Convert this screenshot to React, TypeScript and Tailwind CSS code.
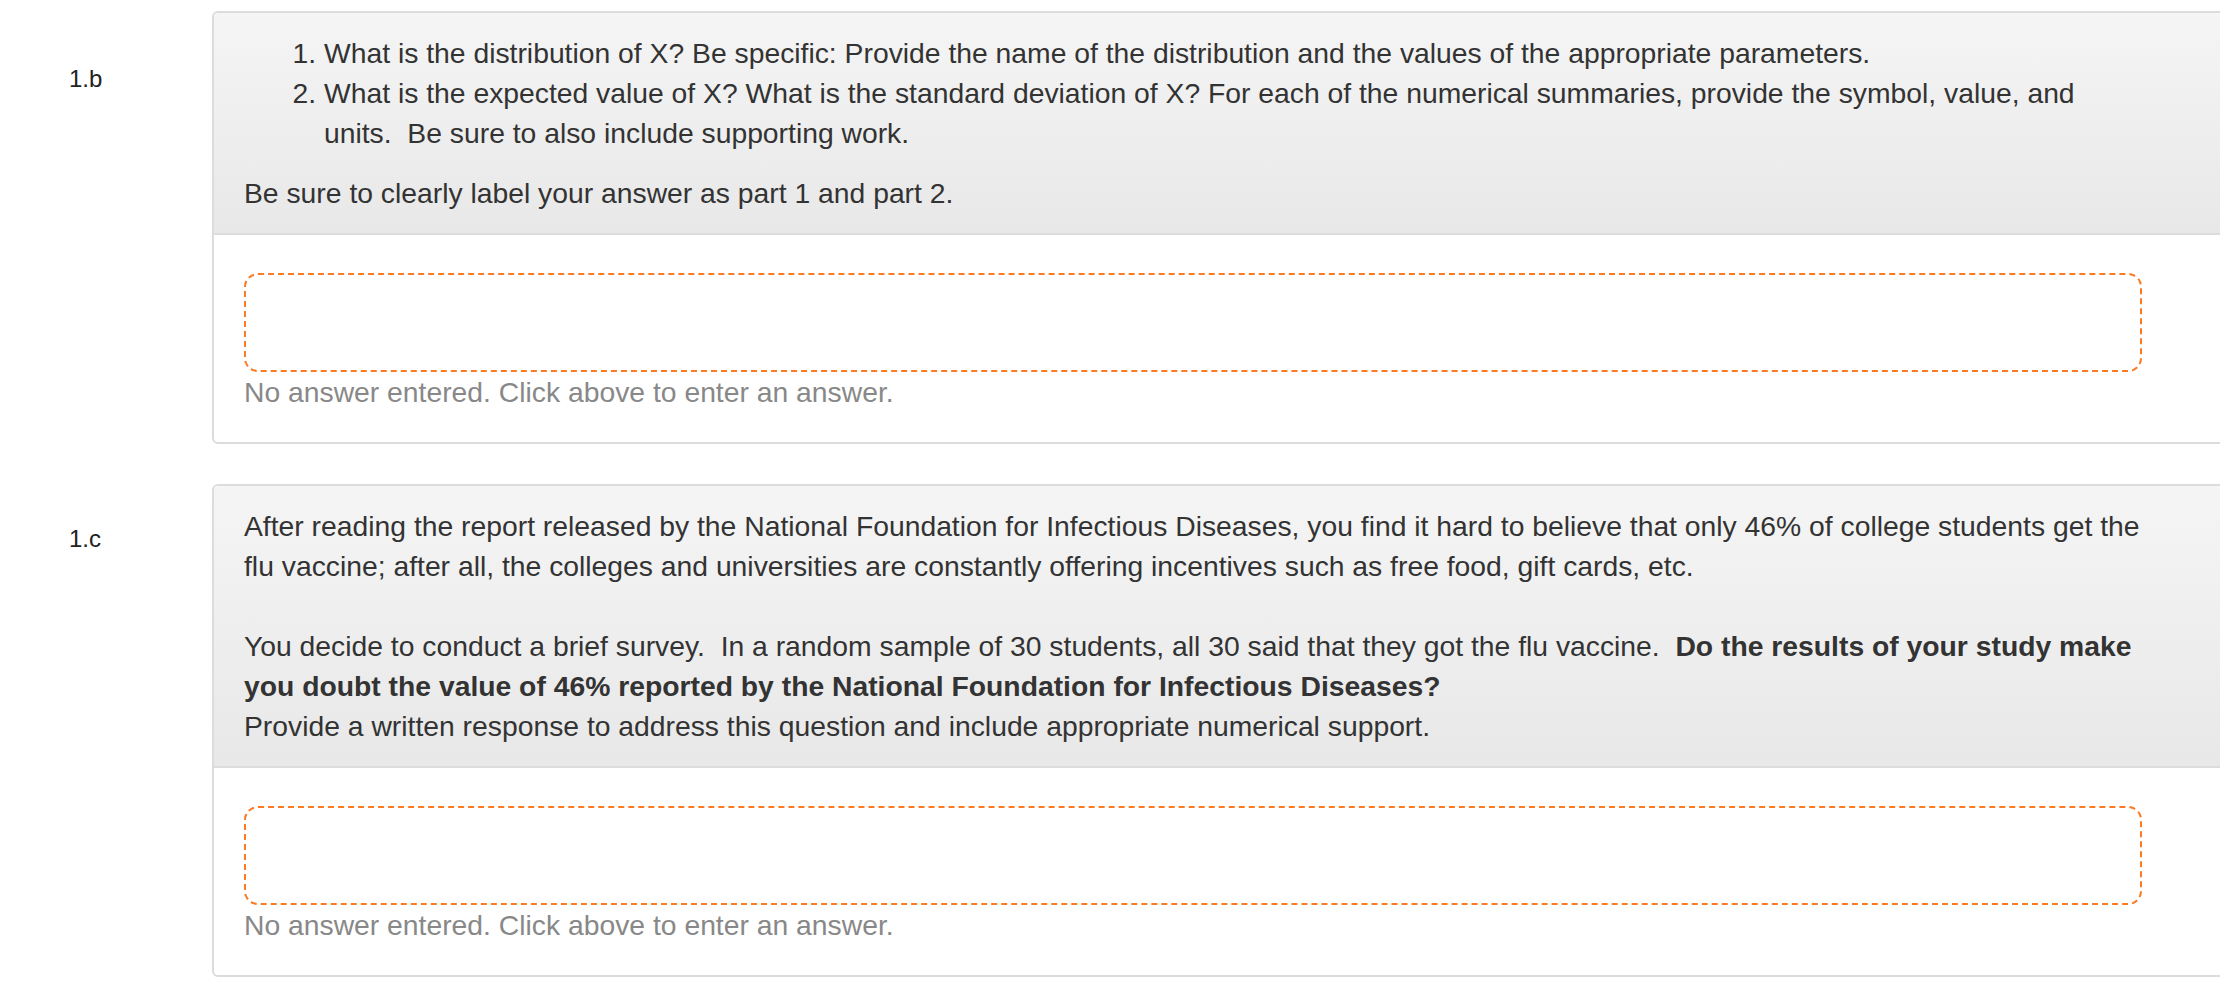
import React from "react";

function AnswerBox() {
  return (
    <div className="pl-[30px] pr-[136px] pt-[38px] pb-[30px]">
      <div className="h-[99px] rounded-[14px] border-2 border-dashed border-[#fb7a22]" />
      <div className="text-[28.3px] leading-[40px] text-[#888]">
        No answer entered. Click above to enter an answer.
      </div>
    </div>
  );
}

function Question({
  label,
  labelTop,
  children,
}: {
  label: string;
  labelTop: string;
  children: React.ReactNode;
}) {
  return (
    <div className="flex">
      <div className={`w-[212px] shrink-0 pl-[69px] text-[24px] leading-[34px] text-[#222] ${labelTop}`}>
        {label}
      </div>
      <div className="mr-[-60px] flex-1 overflow-hidden rounded-[6px] border-2 border-[#dcdcdc] bg-white">
        <div className="border-b-2 border-[#dcdcdc] bg-gradient-to-b from-[#f5f5f5] to-[#e8e8e8] pl-[30px] pr-[134px] py-[20px] text-[28.3px] leading-[40px] text-[#333]">
          {children}
        </div>
        <AnswerBox />
      </div>
    </div>
  );
}

export default function App() {
  return (
    <div className="min-h-screen w-full overflow-hidden bg-white pt-[11px] font-['Liberation_Sans',Arial,sans-serif]">
      <Question label="1.b" labelTop="mt-[51px]">
        <ol className="mb-[20px] list-decimal pl-[80px]">
          <li>
            What is the distribution of X? Be specific: Provide the name of the distribution and the
            values of the appropriate parameters.
          </li>
          <li>
            What is the expected value of X? What is the standard deviation of X? For each of the
            numerical summaries, provide the symbol, value, and units.&nbsp; Be sure to also include
            supporting work.
          </li>
        </ol>
        <p>Be sure to clearly label your answer as part 1 and part 2.</p>
      </Question>

      <div className="h-[40px]" />

      <Question label="1.c" labelTop="mt-[38px]">
        <p>
          After reading the report released by the National Foundation for Infectious Diseases, you
          find it hard to believe that only 46% of college students get the flu vaccine; after all,
          the colleges and universities are constantly offering incentives such as free food, gift
          cards, etc.
        </p>
        <br />
        <p>
          You decide to conduct a brief survey.&nbsp; In a random sample of 30 students, all 30 said
          that they got the flu vaccine.&nbsp;{" "}
          <b>
            Do the results of your study make you doubt the value of 46% reported by the National
            Foundation for Infectious Diseases?
          </b>
          <br />
          Provide a written response to address this question and include appropriate numerical
          support.
        </p>
      </Question>
    </div>
  );
}
